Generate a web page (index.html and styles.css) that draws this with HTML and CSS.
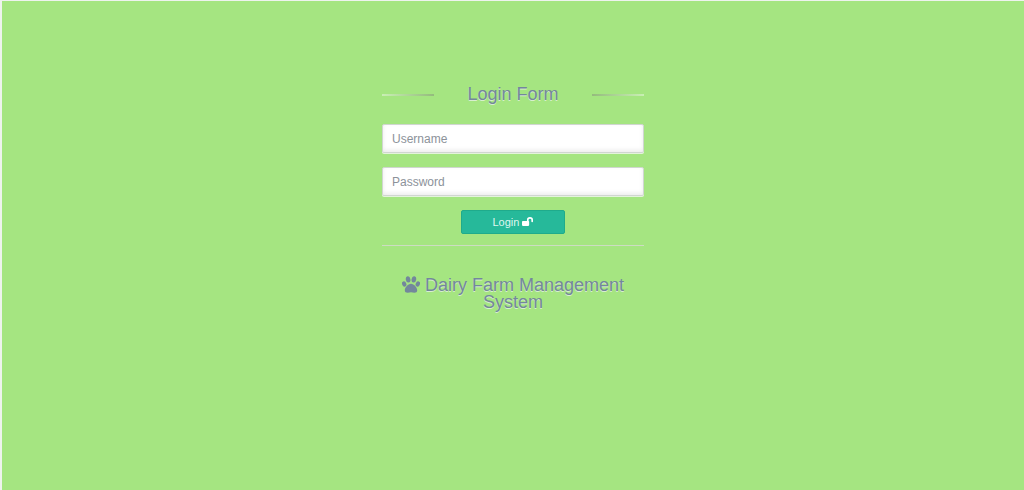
FILE: index.html
```html
<!DOCTYPE html>
<html lang="en">
<head>
    <meta charset="UTF-8">
    <meta name="viewport" content="width=device-width, initial-scale=1.0">
    <title>Dairy Farm Management System</title>
    <link rel="stylesheet" href="styles.css">
</head>
<body class="login">
    <div class="login_wrapper">
        <form class="login_form" method="post">
            <h1 class="form_title">Login Form</h1>
            <input type="text" class="form-control" name="username" placeholder="Username" aria-label="Username" required>
            <input type="password" class="form-control" name="password" placeholder="Password" aria-label="Password" required>
            <button type="submit" class="btn">
                Login
                <svg class="icon-unlock" viewBox="0 0 20 16" aria-hidden="true">
                    <rect x="0" y="7" width="13" height="9" rx="1.5" fill="currentColor"/>
                    <path d="M10.5 8V5a4 3.5 0 0 1 8 0v3" fill="none" stroke="currentColor" stroke-width="3" stroke-linecap="round"/>
                </svg>
            </button>
        </form>
        <div class="separator">
            <h1 class="brand">
                <svg class="icon-paw" viewBox="0 0 18 17" aria-hidden="true">
                    <ellipse cx="6.1" cy="3.4" rx="2.3" ry="3.2" transform="rotate(-10 6.1 3.4)"/>
                    <ellipse cx="11.9" cy="3.4" rx="2.3" ry="3.2" transform="rotate(10 11.9 3.4)"/>
                    <ellipse cx="2.2" cy="8" rx="2.1" ry="2.8" transform="rotate(-22 2.2 8)"/>
                    <ellipse cx="15.8" cy="8" rx="2.1" ry="2.8" transform="rotate(22 15.8 8)"/>
                    <path d="M9 7.8c2.8 0 6.2 3.8 6.2 6.4 0 1.8-1.200 2.500-2.800 2.500-1.300 0-2.300-.4-3.400-.4s-2.100.4-3.400.4c-1.600 0-2.800-.7-2.800-2.500 0-2.600 3.400-6.400 6.200-6.400z"/>
                </svg>
                Dairy Farm Management System
            </h1>
        </div>
    </div>
</body>
</html>
```

FILE: styles.css
```css
* {
    box-sizing: border-box;
}
body {
    margin: 0;
    font-family: "Liberation Sans", Arial, sans-serif;
}
.login {
    min-height: 100vh;
    background: #a5e581;
    border-top: 1px solid #eef3ee;
    border-left: 2px solid #eef3ee;
}
.login_wrapper {
    max-width: 262px;
    margin: 0 auto;
    padding-top: 85px;
    color: #73879c;
    text-align: center;
    text-shadow: 0 1px 0 #d8eed0;
}
.login_form {
    display: flex;
    flex-direction: column;
    align-items: center;
}
h1 {
    margin: 0;
    font-size: 18px;
    font-weight: normal;
    line-height: 17px;
}
.form_title {
    display: flex;
    align-items: center;
    justify-content: space-between;
    width: 100%;
    margin-bottom: 21px;
}
.form_title::before,
.form_title::after {
    content: "";
    width: 20%;
    height: 2px;
    background: linear-gradient(to right, #c9efb4, #94bb7d);
}
.form_title::after {
    background: linear-gradient(to left, #c9efb4, #94bb7d);
}
.form-control {
    width: 100%;
    height: 29px;
    margin-bottom: 14px;
    padding: 0 9px;
    border: 1px solid #d0d6d0;
    border-radius: 2px;
    background: #fff;
    box-shadow: 0 1px 0 #e4f3dc, inset 0 -2px 4px rgba(0, 0, 0, 0.08);
    color: #777;
    font-family: inherit;
    font-size: 12px;
}
.form-control::placeholder {
    color: #8c929a;
}
.btn {
    width: 40%;
    height: 24px;
    padding: 0;
    border: 1px solid #1fab8c;
    border-radius: 2px;
    background: #26b99a;
    color: #dff7ef;
    font-family: inherit;
    font-size: 11px;
    cursor: pointer;
}
.btn:hover {
    background: #169f85;
}
.icon-unlock {
    width: 11px;
    height: 9px;
    color: #fff;
}
.separator {
    margin-top: 11px;
    padding: 30px 15px 0;
    border-top: 1px solid #ccdcc2;
}
.icon-paw {
    width: 18px;
    height: 17px;
    fill: #73879c;
    vertical-align: -2px;
}
```
